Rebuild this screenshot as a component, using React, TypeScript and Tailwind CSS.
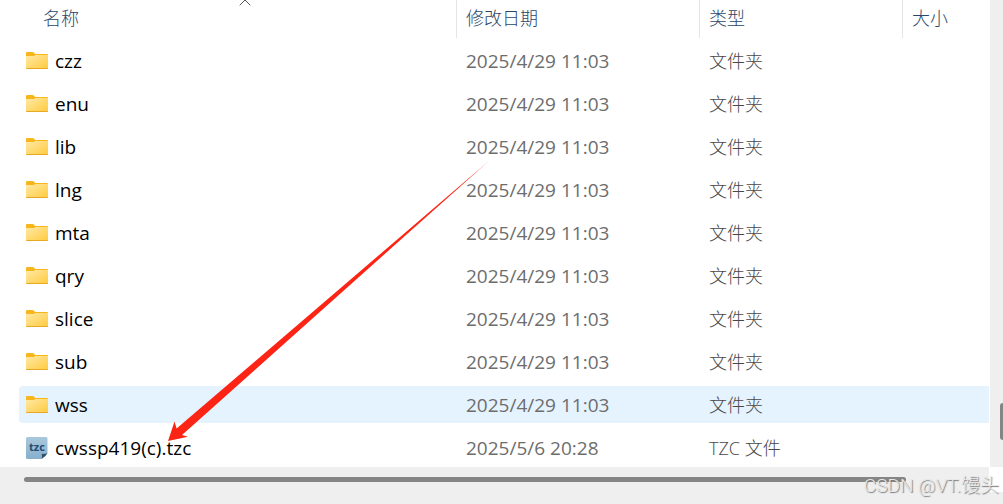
interface FileEntry {
  name: string;
  modified: string;
  type: string;
  hovered?: boolean;
}

const FOLDER = '文件夹';

const entries: FileEntry[] = [
  { name: 'czz', modified: '2025/4/29 11:03', type: FOLDER },
  { name: 'enu', modified: '2025/4/29 11:03', type: FOLDER },
  { name: 'lib', modified: '2025/4/29 11:03', type: FOLDER },
  { name: 'lng', modified: '2025/4/29 11:03', type: FOLDER },
  { name: 'mta', modified: '2025/4/29 11:03', type: FOLDER },
  { name: 'qry', modified: '2025/4/29 11:03', type: FOLDER },
  { name: 'slice', modified: '2025/4/29 11:03', type: FOLDER },
  { name: 'sub', modified: '2025/4/29 11:03', type: FOLDER },
  { name: 'wss', modified: '2025/4/29 11:03', type: FOLDER, hovered: true },
  { name: 'cwssp419(c).tzc', modified: '2025/5/6 20:28', type: 'TZC 文件' },
];

const columns = ['名称', '修改日期', '类型', '大小'];

function FolderIcon() {
  return (
    <svg width="22" height="18" viewBox="0 0 22 18" className="shrink-0" aria-hidden="true">
      <defs>
        <linearGradient id="folder" x1="0" y1="0" x2="1" y2="1">
          <stop offset="0" stopColor="#ffe9a6" />
          <stop offset="1" stopColor="#ffcb3d" />
        </linearGradient>
      </defs>
      <path d="M0 1.2Q0 0 1.2 0H6.6Q7.4 0 8 .8L9.2 2H21Q22 2 22 3V6H0Z" fill="#f8b51c" />
      <path d="M0 4H7Q8 4 8.6 3.5L9.2 3H22V16.2Q22 17 21 17H1Q0 17 0 16.2Z" fill="url(#folder)" />
      <path d="M0 16H22Q22 17 21 17H1Q0 17 0 16Z" fill="#e8a824" />
    </svg>
  );
}

function TzcIcon() {
  return (
    <svg width="22" height="22" viewBox="0 0 22 22" className="shrink-0" aria-hidden="true">
      <defs>
        <linearGradient id="tzc" x1="0" y1="0" x2="0" y2="1">
          <stop offset="0" stopColor="#a9c8dd" />
          <stop offset="1" stopColor="#86afcb" />
        </linearGradient>
      </defs>
      <path d="M1.5 0H20Q21.5 0 21.5 1.5V16L15.5 22H1.5Q0 22 0 20.5V1.5Q0 0 1.5 0Z" fill="url(#tzc)" />
      <path d="M15.5 22Q16.4 20 15.7 16.8Q19 17.2 21.5 16Q20 19.5 15.5 22Z" fill="#2b5070" />
      <text x="11" y="14" textAnchor="middle" fontSize="11" fontWeight="700" fill="#234b73" fontFamily="Open Sans, sans-serif">
        tzc
      </text>
    </svg>
  );
}

function SortCaret() {
  return (
    <svg width="12" height="6" viewBox="0 0 12 6" className="absolute top-0 left-1/2 -translate-x-1/2" aria-hidden="true">
      <path d="M.7 5.3L6 0L11.3 5.3" fill="none" stroke="#555" strokeWidth="1" />
    </svg>
  );
}

function FileRow({ entry }: { entry: FileEntry }) {
  const shade = entry.hovered ? 'bg-[#e5f3fe]' : '';
  return (
    <tr className="group">
      <td className="py-[3px] group-last:pb-px">
        <div className={`flex h-[37px] items-center gap-[7px] rounded-l-sm pl-[7px] text-black ${shade}`}>
          {entry.type === FOLDER ? <FolderIcon /> : <TzcIcon />}
          <span>{entry.name}</span>
        </div>
      </td>
      <td className="py-[3px] group-last:pb-px">
        <div className={`flex h-[37px] items-center pl-[10px] ${shade}`}>{entry.modified}</div>
      </td>
      <td className="py-[3px] group-last:pb-px">
        <div className={`flex h-[37px] items-center pl-[10px] text-lg font-light text-[#484848] ${shade}`}>{entry.type}</div>
      </td>
      <td className="py-[3px] group-last:pb-px">
        <div className={`h-[37px] ${shade}`} />
      </td>
    </tr>
  );
}

// Red pointer laid over the list, aimed at the .tzc file
function PointerArrow() {
  return (
    <svg width="330" height="290" viewBox="164 155 330 290" className="pointer-events-none absolute top-[155px] left-[164px]" aria-hidden="true">
      <defs>
        <linearGradient id="tail" gradientUnits="userSpaceOnUse" x1="490" y1="160" x2="465" y2="181">
          <stop offset="0" stopColor="#fc2415" stopOpacity="0.5" />
          <stop offset="1" stopColor="#fc2415" />
        </linearGradient>
      </defs>
      <path d="M168 441L174.5 421.5L176.6 428.5L490 160L182 435L188 436.8Z" fill="url(#tail)" />
    </svg>
  );
}

export default function App() {
  return (
    <div className="relative flex min-h-screen flex-col overflow-hidden bg-[#efefef] font-['Open_Sans','Noto_Sans_CJK_SC',sans-serif]">
      <div className="flex">
        <main className="min-w-0 flex-1 bg-white pr-px pl-[19px]">
          <table className="w-full table-fixed border-collapse text-left text-[19px] leading-6 text-[#6d6d6d]">
            <colgroup>
              <col className="w-[437px]" />
              <col className="w-[243px]" />
              <col className="w-[203px]" />
              <col />
            </colgroup>
            <thead>
              <tr>
                {columns.map((column, index) => (
                  <th key={column} className="p-0 pb-px text-lg font-light text-[#2c4668]">
                    <div
                      className={`relative flex h-[38px] items-center pb-0.5 pl-[9px] ${index === 0 ? 'ml-[15px]' : 'border-l border-[#e5e5e5]'}`}
                    >
                      <button type="button">{column}</button>
                      {index === 0 && <SortCaret />}
                    </div>
                  </th>
                ))}
              </tr>
            </thead>
            <tbody>
              {entries.map((entry) => (
                <FileRow key={entry.name} entry={entry} />
              ))}
            </tbody>
          </table>
        </main>
        <div className="flex w-[13px] justify-end bg-[#efefef] pt-[403px]">
          <div className="h-[37px] w-[3px] rounded-l-sm bg-[#858585]" />
        </div>
      </div>

      <div className="flex">
        <div className="flex-1 pt-[10px] pr-[83px] pl-6">
          <div className="h-[5px] rounded-full bg-[#858585]" />
        </div>
        <div className="h-[25px] w-[14px] bg-white" />
      </div>

      <PointerArrow />
      <span className="absolute right-1 bottom-1 font-['Roboto','Noto_Sans_CJK_SC',sans-serif] text-[19px] leading-7 font-light text-[#e8e8e8] [text-shadow:1px_1px_1px_#777]">
        CSDN @VT.馒头
      </span>
    </div>
  );
}
